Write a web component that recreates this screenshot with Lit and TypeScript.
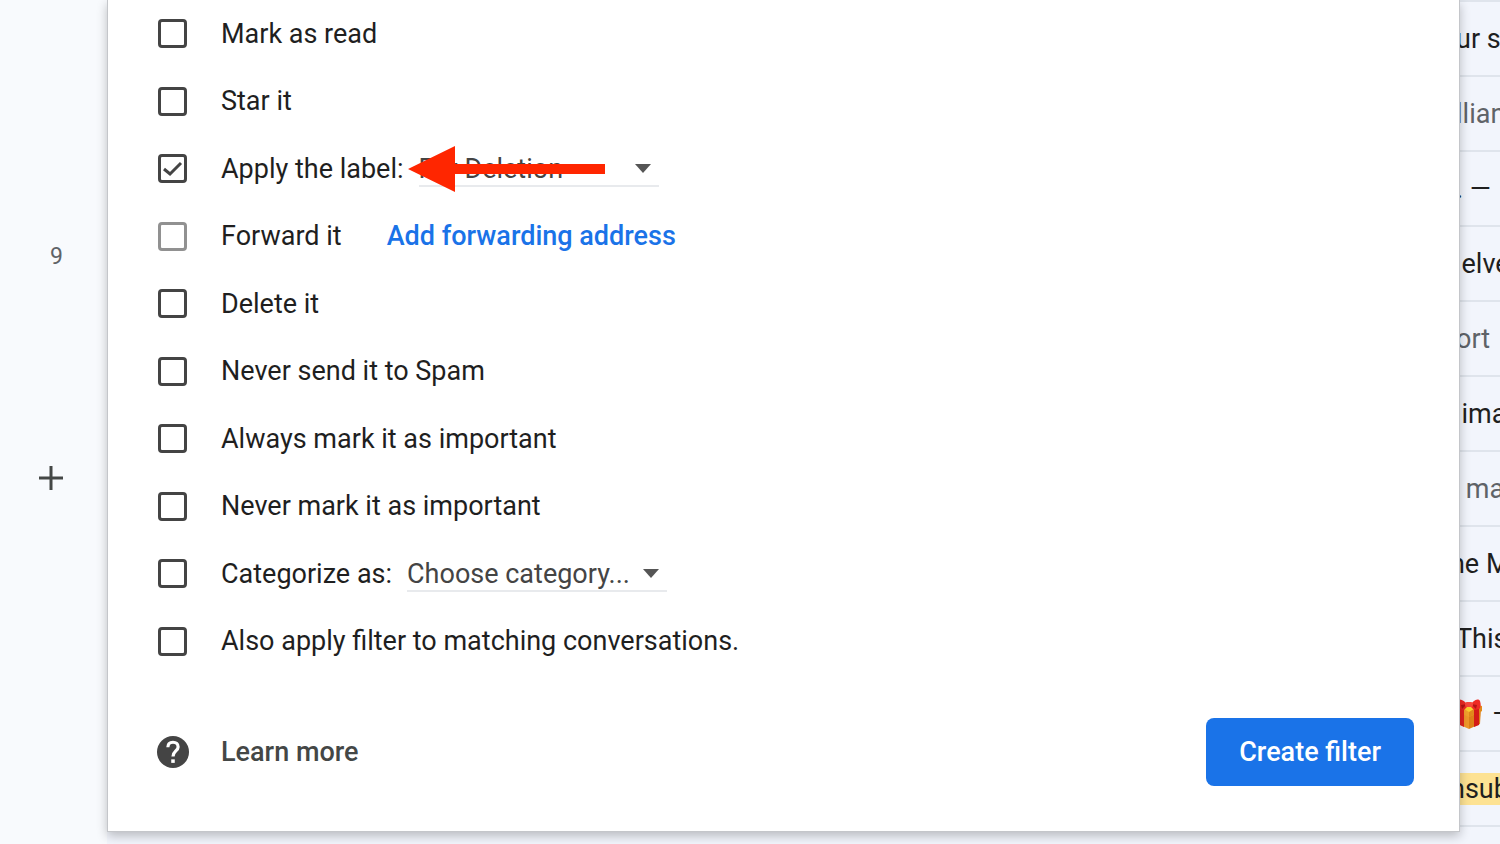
import { LitElement, html, css, nothing, svg } from "lit";
import { customElement, state } from "lit/decorators.js";
import { classMap } from "lit/directives/class-map.js";

interface Action {
  id: string;
  label: string;
  disabled?: boolean;
  link?: string;
  select?: { value: string; size: string; name: string; marked?: boolean };
}

const ACTIONS: Action[] = [
  { id: "read", label: "Mark as read" },
  { id: "star", label: "Star it" },
  {
    id: "label",
    label: "Apply the label:",
    select: { value: "For Deletion", size: "narrow", name: "Label", marked: true },
  },
  { id: "forward", label: "Forward it", disabled: true, link: "Add forwarding address" },
  { id: "delete", label: "Delete it" },
  { id: "spam", label: "Never send it to Spam" },
  { id: "important", label: "Always mark it as important" },
  { id: "unimportant", label: "Never mark it as important" },
  {
    id: "category",
    label: "Categorize as:",
    select: { value: "Choose category...", size: "wide", name: "Category" },
  },
  { id: "matching", label: "Also apply filter to matching conversations." },
];

interface Snippet {
  text: string;
  muted?: boolean;
  highlight?: boolean;
  tucked?: boolean;
  gift?: boolean;
}

const SNIPPETS: Snippet[] = [
  { text: "ur s" },
  { text: "llian", muted: true },
  { text: ". —" },
  { text: "\u2009elve" },
  { text: "ort", muted: true },
  { text: "\u2009ima" },
  { text: "r ma", muted: true, tucked: true },
  { text: "he M", tucked: true },
  { text: "This" },
  { text: "–", gift: true },
  { text: "nsub", highlight: true, tucked: true },
  { text: "" },
];

@customElement("mail-list")
export class MailList extends LitElement {
  static styles = css`
    :host {
      display: block;
      background: #f2f5fc;
    }
    .row {
      box-sizing: border-box;
      display: flex;
      align-items: center;
      justify-content: flex-end;
      height: 75px;
      border-top: 2px solid #dfe4ec;
    }
    .snippet {
      flex: 0 0 44px;
      display: flex;
      align-items: center;
      gap: 10px;
      overflow: hidden;
      white-space: pre;
      line-height: 32px;
      color: #1f1f1f;
    }
    .tucked {
      flex-basis: 50px;
    }
    .muted {
      color: #5f6368;
    }
    .highlight {
      background: #fde293;
    }
    .gift {
      flex: none;
      width: 26px;
      height: 32px;
    }
  `;

  private gift() {
    return html`<svg class="gift" viewBox="0 0 26 32" role="img" aria-label="gift">
      <path d="M1 11 L13 17 V31 L2 26 Z" fill="#f0992a" />
      <path d="M25 11 L13 17 V31 L24 26 Z" fill="#dd8118" />
      <path d="M0 8 L13 4 L26 8 V13 L13 19 L0 13 Z" fill="#f2a32c" />
      <path d="M26 8 V13 L13 19 V13 Z" fill="#e08a1c" />
      <path d="M5 9 L13 7 L21 9 L13 14 Z" fill="#fbd02f" />
      <path d="M3 9 L8 11 V29 L4 27 Z" fill="#e0241e" />
      <path d="M18 11 L23 9 V27 L18 29 Z" fill="#d41b17" />
      <path d="M12 8 C9 2 3 0 1 3 C0 6 1 10 3 11 L8 12 Z" fill="#ee2a24" />
      <path d="M14 8 C17 2 22 0 24 3 C25 6 25 10 23 11 L18 12 Z" fill="#ee2a24" />
      <path d="M11 6 L5 7 L6 11 Z M15 6 L21 7 L20 11 Z" fill="#b51414" />
      <rect x="9" y="4" width="8" height="5" rx="2" fill="#f8463c" />
    </svg>`;
  }

  render() {
    return SNIPPETS.map((s) => {
      const classes = {
        snippet: true,
        muted: !!s.muted,
        highlight: !!s.highlight,
        tucked: !!s.tucked,
      };
      return html`<div class="row">
        <span class=${classMap(classes)}>${s.gift ? this.gift() : nothing}${s.text}</span>
      </div>`;
    });
  }
}

@customElement("filter-dialog")
export class FilterDialog extends LitElement {
  @state() private checked = new Set<string>(["label"]);

  static styles = css`
    :host {
      display: block;
      background: #fff;
      border: 1px solid #c4c6ca;
      border-top: 0;
      box-shadow: 0 4px 10px rgba(0, 0, 0, 0.24);
    }
    .actions {
      display: grid;
      grid-auto-rows: 1fr;
      height: 675px;
      padding: 0 50px;
    }
    .action {
      display: flex;
      align-items: center;
    }
    .choice {
      display: flex;
      align-items: center;
      gap: 34px;
      line-height: 36px;
      white-space: nowrap;
    }
    .box {
      display: grid;
      width: 29px;
      height: 29px;
    }
    .box > * {
      grid-area: 1 / 1;
    }
    .tick {
      appearance: none;
      box-sizing: border-box;
      width: 29px;
      height: 29px;
      margin: 0;
      border: 3px solid #444;
      border-radius: 4px;
      background: #fff;
    }
    .tick:disabled {
      border-color: #919191;
    }
    .mark {
      width: 29px;
      height: 29px;
      pointer-events: none;
    }
    .picker {
      position: relative;
      display: grid;
      align-items: center;
      margin-left: 15px;
    }
    .narrow {
      width: 240px;
    }
    .wide {
      width: 260px;
    }
    .select {
      grid-area: 1 / 1;
      appearance: none;
      box-sizing: border-box;
      width: 100%;
      height: 36px;
      margin: 0;
      padding: 2px 0 0;
      border: 0;
      border-bottom: 2px solid #e8eaed;
      border-radius: 0;
      background: none;
      font: inherit;
      color: #444;
    }
    .caret {
      grid-area: 1 / 1;
      justify-self: end;
      width: 16px;
      height: 9px;
      margin-right: 8px;
      pointer-events: none;
    }
    .pointer {
      position: absolute;
      left: -11px;
      top: -5px;
      width: 197px;
      height: 46px;
      pointer-events: none;
    }
    .link {
      margin-left: 45px;
      font-weight: 500;
      color: #1a73e8;
      text-decoration: none;
    }
    .footer {
      display: flex;
      align-items: center;
      justify-content: space-between;
      padding: 43px 45px 45px 49px;
    }
    .help {
      display: flex;
      align-items: center;
      gap: 32px;
      font-weight: 500;
      color: #444746;
      text-decoration: none;
    }
    .help-icon {
      width: 32px;
      height: 32px;
    }
    .create {
      height: 68px;
      padding: 0 33px;
      border: 0;
      border-radius: 8px;
      background: #1a73e8;
      font: inherit;
      font-weight: 500;
      color: #fff;
    }
  `;

  private toggle(id: string) {
    const next = new Set(this.checked);
    if (!next.delete(id)) next.add(id);
    this.checked = next;
  }

  private picker(s: NonNullable<Action["select"]>) {
    return html`<span class="picker ${s.size}">
      <select class="select" aria-label=${s.name}>
        <option>${s.value}</option>
      </select>
      <svg class="caret" viewBox="0 0 16 9" aria-hidden="true">
        <path d="M0 0 H16 L8 9 Z" fill="#555" />
      </svg>
      ${s.marked
        ? html`<svg class="pointer" viewBox="0 0 197 46" aria-hidden="true">
            <path d="M0 23 L47 0 V18 H197 V28 H47 V46 Z" fill="#ff2600" />
          </svg>`
        : nothing}
    </span>`;
  }

  private action(a: Action) {
    const on = this.checked.has(a.id);
    return html`<div class="action">
      <label class="choice">
        <span class="box">
          <input
            class="tick"
            type="checkbox"
            .checked=${on}
            ?disabled=${a.disabled ?? false}
            @change=${() => this.toggle(a.id)}
          />
          <svg class="mark" viewBox="0 0 29 29" aria-hidden="true">
            ${on
              ? svg`<path d="M6 15 L12 20 L23 9" fill="none" stroke="#444" stroke-width="3" />`
              : nothing}
          </svg>
        </span>
        <span>${a.label}</span>
      </label>
      ${a.select ? this.picker(a.select) : nothing}
      ${a.link ? html`<a class="link" href="#forwarding">${a.link}</a>` : nothing}
    </div>`;
  }

  render() {
    return html`
      <div class="actions">${ACTIONS.map((a) => this.action(a))}</div>
      <div class="footer">
        <a class="help" href="#help">
          <svg class="help-icon" viewBox="2 2 20 20" aria-hidden="true">
            <circle cx="12" cy="12" r="10" fill="#444" />
            <path
              d="M8.800 9 C8.800 6.900 10.200 5.900 12 5.900 C13.900 5.900 15.200 7.100 15.200 8.800 C15.200 11.300 12 11.500 12 14.800"
              fill="none"
              stroke="#fff"
              stroke-width="2"
            />
            <rect x="10.900" y="16.600" width="2.200" height="2.200" fill="#fff" />
          </svg>
          <span>Learn more</span>
        </a>
        <button class="create" type="button">Create filter</button>
      </div>
    `;
  }
}

@customElement("app-root")
export class AppRoot extends LitElement {
  static styles = css`
    :host {
      display: grid;
      grid-template-columns: 107px 1fr;
      height: 100vh;
      overflow: hidden;
      background: #f8fafd;
      font-family: Roboto, "Liberation Sans", sans-serif;
      font-size: 27px;
      color: #1f1f1f;
    }
    .side {
      display: flex;
      flex-direction: column;
      align-items: flex-end;
      gap: 193px;
      padding: 241px 44px 0 0;
    }
    .count {
      font-size: 23px;
      line-height: 32px;
      color: #5f6368;
    }
    .add {
      display: block;
      padding: 0;
      border: 0;
      background: none;
    }
    .plus {
      display: block;
      width: 24px;
      height: 24px;
    }
    .main {
      display: grid;
      grid-template-columns: 1fr;
      align-items: start;
      min-width: 0;
    }
    .list {
      grid-area: 1 / 1;
    }
    .dialog {
      grid-area: 1 / 1;
      margin-right: 40px;
      z-index: 1;
    }
  `;

  render() {
    return html`
      <nav class="side">
        <span class="count">9</span>
        <button class="add" type="button" aria-label="Create new label">
          <svg class="plus" viewBox="0 0 24 24" aria-hidden="true">
            <path d="M12 0 V24 M0 12 H24" stroke="#444746" stroke-width="3" />
          </svg>
        </button>
      </nav>
      <main class="main">
        <mail-list class="list"></mail-list>
        <filter-dialog class="dialog"></filter-dialog>
      </main>
    `;
  }
}
